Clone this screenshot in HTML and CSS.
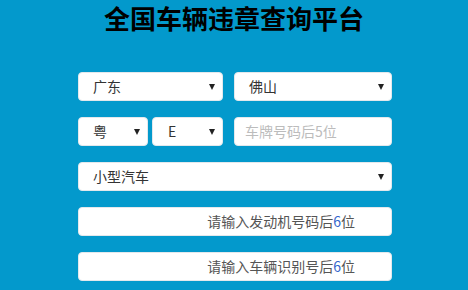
FILE: index.html
```html
<!DOCTYPE html>
<html lang="zh-CN">
<head>
    <meta charset="UTF-8">
    <meta name="viewport" content="width=device-width, initial-scale=1.0">
    <title>全国车辆违章查询平台</title>
    <link rel="stylesheet" href="styles.css">
</head>
<body>
    <h1>全国车辆违章查询平台</h1>
    <div class="form">
        <div class="row">
            <div class="field select w-half-left">广东<span class="arrow"></span></div>
            <div class="field select w-half-right">佛山<span class="arrow"></span></div>
        </div>
        <div class="row">
            <div class="field select w-prefix">粤<span class="arrow"></span></div>
            <div class="field select w-letter">E<span class="arrow"></span></div>
            <div class="field input w-half-right placeholder">车牌号码后5位</div>
        </div>
        <div class="row">
            <div class="field select w-full">小型汽车<span class="arrow"></span></div>
        </div>
        <div class="row">
            <div class="field hint w-full">请输入发动机号码后<span class="num">6</span>位</div>
        </div>
        <div class="row">
            <div class="field hint w-full">请输入车辆识别号后<span class="num">6</span>位</div>
        </div>
    </div>
</body>
</html>
```

FILE: styles.css
```css
body {
    margin: 0;
    background-color: #0399cc;
    font-family: "Noto Sans CJK SC", "Liberation Sans", sans-serif;
}
h1 {
    margin: 0;
    padding-top: 2px;
    font-size: 26px;
    line-height: 32px;
    font-weight: bold;
    text-align: center;
    color: #000;
}
.form {
    width: 314px;
    margin: 38px 0 0 78px;
    display: flex;
    flex-direction: column;
    gap: 16px;
}
.row {
    display: flex;
    gap: 11px;
}
.row .w-prefix {
    margin-right: -7px;
}
.field {
    box-sizing: border-box;
    height: 29px;
    background: #fff;
    border: 1px solid #e3e8ec;
    border-radius: 4px;
    font-size: 14px;
    line-height: 27px;
    color: #333;
    display: flex;
    align-items: center;
    white-space: nowrap;
}
.select {
    padding-left: 14px;
    padding-right: 7px;
}
.arrow {
    margin-left: auto;
    width: 0;
    height: 0;
    border-left: 3px solid transparent;
    border-right: 3px solid transparent;
    border-top: 6px solid #222;
}
.w-half-left { width: 145px; }
.w-half-right { width: 158px; }
.w-prefix { width: 70px; }
.w-letter { width: 71px; padding-left: 15px; }
.w-full { width: 314px; }
.input {
    padding-left: 10px;
}
.placeholder {
    color: #bcbcbc;
}
.hint {
    justify-content: flex-end;
    padding-right: 36px;
    color: #555;
}
.num {
    color: #3366cc;
}
```
